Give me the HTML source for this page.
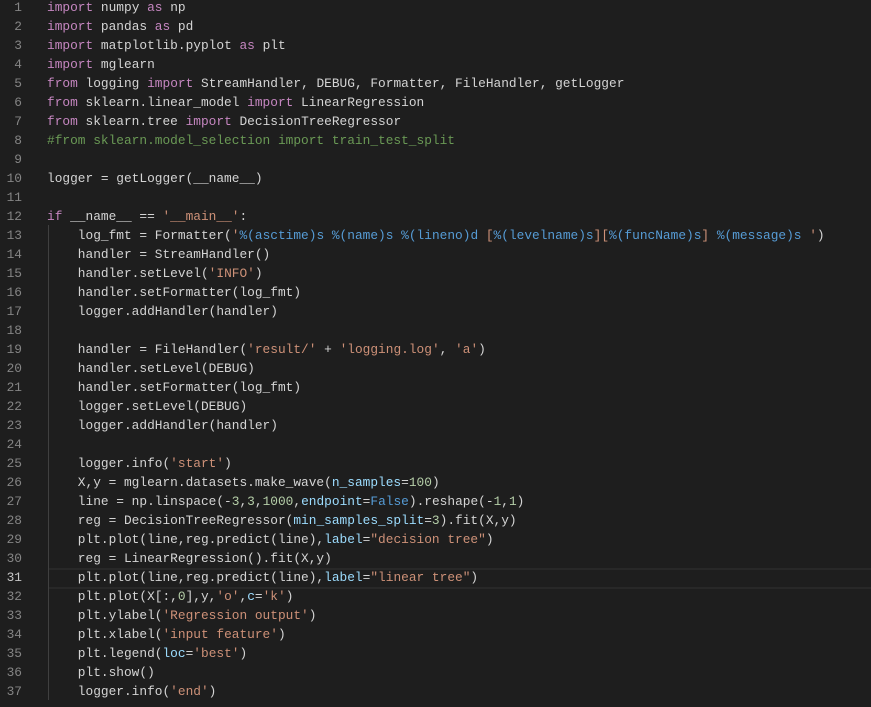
<!DOCTYPE html><html><head><style>
body{margin:0;background:#1e1e1e;width:871px;height:707px;overflow:hidden;position:relative}
.ln{position:absolute;left:0;width:22px;text-align:right;color:#858585}
pre{margin:0;position:absolute;left:0;top:-2px;font:12.83px/19px "Liberation Mono",monospace;color:#d4d4d4}
.l{position:relative;height:19px;padding-left:47px;white-space:pre}
.k{color:#c586c0}.s{color:#ce9178}.f{color:#569cd6}.c{color:#6a9955}.n{color:#b5cea8}.p{color:#9cdcfe}
.cur{position:absolute;left:48px;top:568px;width:823px;height:17px;border-top:2px solid #282828;border-bottom:2px solid #282828}
.g{position:absolute;left:48px;top:225px;width:1px;height:475px;background:#404040}
</style></head><body>
<div class="cur"></div><div class="g"></div>
<pre>
<div class="l"><span class="ln">1</span><span class="k">import</span> numpy <span class="k">as</span> np</div><div class="l"><span class="ln">2</span><span class="k">import</span> pandas <span class="k">as</span> pd</div><div class="l"><span class="ln">3</span><span class="k">import</span> matplotlib.pyplot <span class="k">as</span> plt</div><div class="l"><span class="ln">4</span><span class="k">import</span> mglearn</div><div class="l"><span class="ln">5</span><span class="k">from</span> logging <span class="k">import</span> StreamHandler, DEBUG, Formatter, FileHandler, getLogger</div><div class="l"><span class="ln">6</span><span class="k">from</span> sklearn.linear_model <span class="k">import</span> LinearRegression</div><div class="l"><span class="ln">7</span><span class="k">from</span> sklearn.tree <span class="k">import</span> DecisionTreeRegressor</div><div class="l"><span class="ln">8</span><span class="c">#from sklearn.model_selection import train_test_split</span></div><div class="l"><span class="ln">9</span></div><div class="l"><span class="ln">10</span>logger = getLogger(__name__)</div><div class="l"><span class="ln">11</span></div><div class="l"><span class="ln">12</span><span class="k">if</span> __name__ == <span class="s">'__main__'</span>:</div><div class="l"><span class="ln">13</span>    log_fmt = Formatter(<span class="s">'<span class="f">%(asctime)s</span> <span class="f">%(name)s</span> <span class="f">%(lineno)d</span> [<span class="f">%(levelname)s</span>][<span class="f">%(funcName)s</span>] <span class="f">%(message)s</span> '</span>)</div><div class="l"><span class="ln">14</span>    handler = StreamHandler()</div><div class="l"><span class="ln">15</span>    handler.setLevel(<span class="s">'INFO'</span>)</div><div class="l"><span class="ln">16</span>    handler.setFormatter(log_fmt)</div><div class="l"><span class="ln">17</span>    logger.addHandler(handler)</div><div class="l"><span class="ln">18</span></div><div class="l"><span class="ln">19</span>    handler = FileHandler(<span class="s">'result/'</span> + <span class="s">'logging.log'</span>, <span class="s">'a'</span>)</div><div class="l"><span class="ln">20</span>    handler.setLevel(DEBUG)</div><div class="l"><span class="ln">21</span>    handler.setFormatter(log_fmt)</div><div class="l"><span class="ln">22</span>    logger.setLevel(DEBUG)</div><div class="l"><span class="ln">23</span>    logger.addHandler(handler)</div><div class="l"><span class="ln">24</span></div><div class="l"><span class="ln">25</span>    logger.info(<span class="s">'start'</span>)</div><div class="l"><span class="ln">26</span>    X,y = mglearn.datasets.make_wave(<span class="p">n_samples</span>=<span class="n">100</span>)</div><div class="l"><span class="ln">27</span>    line = np.linspace(-<span class="n">3</span>,<span class="n">3</span>,<span class="n">1000</span>,<span class="p">endpoint</span>=<span class="f">False</span>).reshape(-<span class="n">1</span>,<span class="n">1</span>)</div><div class="l"><span class="ln">28</span>    reg = DecisionTreeRegressor(<span class="p">min_samples_split</span>=<span class="n">3</span>).fit(X,y)</div><div class="l"><span class="ln">29</span>    plt.plot(line,reg.predict(line),<span class="p">label</span>=<span class="s">"decision tree"</span>)</div><div class="l"><span class="ln">30</span>    reg = LinearRegression().fit(X,y)</div><div class="l"><span class="ln" style="color:#c6c6c6">31</span>    plt.plot(line,reg.predict(line),<span class="p">label</span>=<span class="s">"linear tree"</span>)</div><div class="l"><span class="ln">32</span>    plt.plot(X[:,<span class="n">0</span>],y,<span class="s">'o'</span>,<span class="p">c</span>=<span class="s">'k'</span>)</div><div class="l"><span class="ln">33</span>    plt.ylabel(<span class="s">'Regression output'</span>)</div><div class="l"><span class="ln">34</span>    plt.xlabel(<span class="s">'input feature'</span>)</div><div class="l"><span class="ln">35</span>    plt.legend(<span class="p">loc</span>=<span class="s">'best'</span>)</div><div class="l"><span class="ln">36</span>    plt.show()</div><div class="l"><span class="ln">37</span>    logger.info(<span class="s">'end'</span>)</div></pre>
</body></html>
